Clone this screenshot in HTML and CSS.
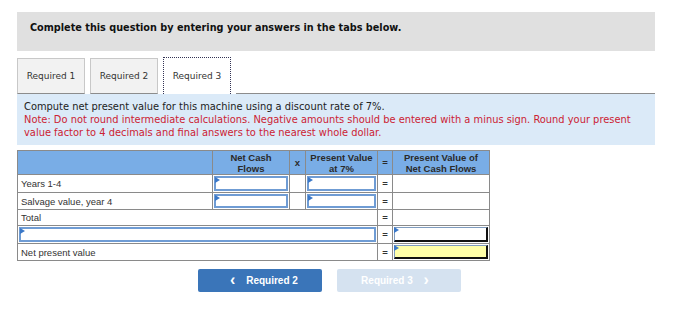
FILE: index.html
```html
<!DOCTYPE html>
<html lang="en">
<head>
    <meta charset="UTF-8">
    <title>Required 3</title>
    <link rel="stylesheet" href="styles.css">
</head>
<body>
    <div class="page">
        <div class="intro">Complete this question by entering your answers in the tabs below.</div>

        <div class="tabs">
            <div class="tab">Required 1</div>
            <div class="tab">Required 2</div>
            <div class="tab active">Required 3</div>
            <div class="tab-rest"></div>
        </div>

        <div class="instructions">
            <p>Compute net present value for this machine using a discount rate of 7%.</p>
            <p class="note">Note: Do not round intermediate calculations. Negative amounts should be entered with a minus sign. Round your present value factor to 4 decimals and final answers to the nearest whole dollar.</p>
        </div>

        <table class="npv">
            <colgroup>
                <col class="c-label">
                <col class="c-ncf">
                <col class="c-op">
                <col class="c-pv">
                <col class="c-eq">
                <col class="c-res">
            </colgroup>
            <tr class="head">
                <th></th>
                <th>Net Cash<br>Flows</th>
                <th>x</th>
                <th>Present Value<br>at 7%</th>
                <th>=</th>
                <th>Present Value of<br>Net Cash Flows</th>
            </tr>
            <tr class="tall">
                <td class="label">Years 1-4</td>
                <td class="in"><div class="field"></div></td>
                <td></td>
                <td class="in"><div class="field"></div></td>
                <td class="eq">=</td>
                <td></td>
            </tr>
            <tr>
                <td class="label">Salvage value, year 4</td>
                <td class="in"><div class="field"></div></td>
                <td></td>
                <td class="in"><div class="field"></div></td>
                <td class="eq">=</td>
                <td></td>
            </tr>
            <tr>
                <td class="label" colspan="4">Total</td>
                <td class="eq">=</td>
                <td></td>
            </tr>
            <tr class="tall">
                <td class="in" colspan="4"><div class="field"></div></td>
                <td class="eq">=</td>
                <td class="in"><div class="field result"></div></td>
            </tr>
            <tr>
                <td class="label" colspan="4">Net present value</td>
                <td class="eq">=</td>
                <td class="in"><div class="field result final"></div></td>
            </tr>
        </table>

        <div class="nav">
            <button class="nav-btn prev"><span class="arrow">&lsaquo;</span> Required 2</button>
            <button class="nav-btn next" disabled>Required 3 <span class="arrow">&rsaquo;</span></button>
        </div>
    </div>
</body>
</html>
```

FILE: styles.css
```css
* {
    margin: 0;
    padding: 0;
    box-sizing: border-box;
}

body {
    background: #fff;
    font-family: "DejaVu Sans", Verdana, sans-serif;
    color: #222;
}

.page {
    padding: 12px 21px 0 17px;
}

.intro {
    background: #e0e0e0;
    height: 39px;
    padding: 10px 0 0 13px;
    font-size: 9.7px;
    font-weight: bold;
    color: #111;
}

/* Tabs */
.tabs {
    display: flex;
    align-items: flex-end;
    margin-top: 6px;
    height: 37px;
}

.tab {
    width: 68px;
    height: 36px;
    margin-right: 5px;
    background: #f2f2f2;
    border: 1px solid #c8c8c8;
    border-bottom: 1px solid #8c8c8c;
    font-size: 9px;
    color: #333;
    display: flex;
    align-items: center;
    justify-content: center;
}

.tab.active {
    background: #fff;
    border: 1px dotted #335;
    border-bottom: none;
    height: 37px;
}

.tab-rest {
    flex: 1;
    border-bottom: 1px solid #8c8c8c;
}

/* Instructions */
.instructions {
    background: #dbeaf8;
    height: 51px;
    padding: 6px 7px 0 7px;
    font-size: 9.9px;
    line-height: 13px;
    color: #222;
}

.note {
    color: #cc2233;
}

/* Table */
.npv {
    margin-top: 5px;
    border-collapse: collapse;
    font-family: "Liberation Sans", Arial, sans-serif;
    font-size: 9.5px;
    color: #333;
}

.npv col.c-label { width: 195px; }
.npv col.c-ncf { width: 77px; }
.npv col.c-op { width: 16px; }
.npv col.c-pv { width: 72px; }
.npv col.c-eq { width: 15px; }
.npv col.c-res { width: 97px; }

.npv th,
.npv td {
    border: 1px solid #8a8a8a;
    height: 16px;
    padding: 0;
}

.npv tr.tall td {
    height: 17px;
}

.npv .head th {
    background: #79ade6;
    height: 24px;
    font-weight: bold;
    color: #2a2a2a;
    line-height: 11px;
    text-align: center;
}

.npv td.label {
    padding-left: 3px;
}

.npv td.eq {
    text-align: center;
    font-weight: bold;
}

.npv td.in {
    padding: 1px;
}

.field {
    position: relative;
    height: 15px;
    background: #fff;
    border: 2px solid #6f9cd4;
}

.npv tr:not(.tall) .field {
    height: 14px;
}

.field::before {
    content: "";
    position: absolute;
    top: -1px;
    left: -1px;
    border-top: 3px solid transparent;
    border-bottom: 3px solid transparent;
    border-left: 5px solid #3a78c8;
}

.field.result {
    border: 1px solid #7f9cbf;
    border-right: 2px solid #111;
    border-bottom: 2px solid #111;
}

.field.final {
    background: #ffffa8;
}

/* Buttons */
.nav {
    display: flex;
    gap: 15px;
    margin: 8px 0 0 181px;
}

.nav-btn {
    width: 124px;
    height: 23px;
    border: none;
    border-radius: 2px;
    font-family: "Liberation Sans", Arial, sans-serif;
    font-size: 10px;
    font-weight: bold;
    color: #fff;
}

.nav-btn .arrow {
    font-size: 16px;
    line-height: 10px;
    margin: 0 8px;
    vertical-align: -1px;
}

.prev {
    background: #3a75b9;
}

.next {
    background: #d5e2f0;
}
```
